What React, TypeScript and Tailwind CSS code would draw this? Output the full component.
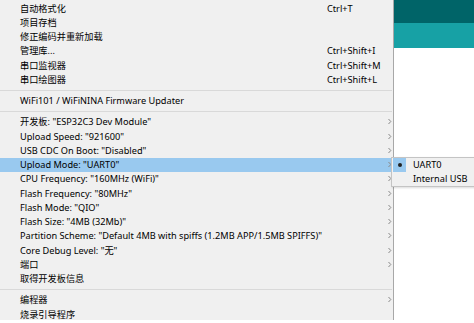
import React from 'react';

type Item =
    | { kind: 'sep' }
    | { kind: 'item'; label: string; shortcut?: string; sub?: boolean; active?: boolean };

const ITEMS: Item[] = [
    { kind: 'item', label: '自动格式化', shortcut: 'Ctrl+T' },
    { kind: 'item', label: '项目存档' },
    { kind: 'item', label: '修正编码并重新加载' },
    { kind: 'item', label: '管理库...', shortcut: 'Ctrl+Shift+I' },
    { kind: 'item', label: '串口监视器', shortcut: 'Ctrl+Shift+M' },
    { kind: 'item', label: '串口绘图器', shortcut: 'Ctrl+Shift+L' },
    { kind: 'sep' },
    { kind: 'item', label: 'WiFi101 / WiFiNINA Firmware Updater' },
    { kind: 'sep' },
    { kind: 'item', label: '开发板: "ESP32C3 Dev Module"', sub: true },
    { kind: 'item', label: 'Upload Speed: "921600"', sub: true },
    { kind: 'item', label: 'USB CDC On Boot: "Disabled"', sub: true },
    { kind: 'item', label: 'Upload Mode: "UART0"', sub: true, active: true },
    { kind: 'item', label: 'CPU Frequency: "160MHz (WiFi)"', sub: true },
    { kind: 'item', label: 'Flash Frequency: "80MHz"', sub: true },
    { kind: 'item', label: 'Flash Mode: "QIO"', sub: true },
    { kind: 'item', label: 'Flash Size: "4MB (32Mb)"', sub: true },
    { kind: 'item', label: 'Partition Scheme: "Default 4MB with spiffs (1.2MB APP/1.5MB SPIFFS)"', sub: true },
    { kind: 'item', label: 'Core Debug Level: "无"', sub: true },
    { kind: 'item', label: '端口', sub: true },
    { kind: 'item', label: '取得开发板信息' },
    { kind: 'sep' },
    { kind: 'item', label: '编程器', sub: true },
    { kind: 'item', label: '烧录引导程序' },
];

function Chevron() {
    return (
        <svg width="5" height="7" viewBox="0 0 5 7" className="shrink-0">
            <polyline points="1.5,1 3.8,3.5 1.5,6" fill="none" stroke="#8a8a8a" strokeWidth="1" />
        </svg>
    );
}

export default function App() {
    return (
        <div
            className="relative w-[474px] h-[323px] overflow-hidden bg-white text-[9.2px] text-black"
            style={{ fontFamily: '"Noto Sans", "Noto Sans CJK SC", sans-serif' }}
        >
            <div className="flex h-full">
                {/* Menu */}
                <div className="w-[394px] h-[320px] shrink-0 bg-[#f0f0f0] border-r border-[#a8a8a8] pt-px">
                    {ITEMS.map((it, i) =>
                        it.kind === 'sep' ? (
                            <div key={i} className="h-[7px] flex items-center">
                                <div className="w-[392px] h-px bg-[#d9d9d9]" />
                            </div>
                        ) : (
                            <div
                                key={i}
                                className={`h-[14.25px] flex items-center leading-none ${it.active ? 'bg-[#99c9ef]' : ''}`}
                            >
                                <span className="pl-[20px] w-[327px] shrink-0 whitespace-nowrap">{it.label}</span>
                                <span className="w-[60px] shrink-0 whitespace-nowrap">{it.shortcut ?? ''}</span>
                                {it.sub && <Chevron />}
                            </div>
                        ),
                    )}
                </div>

                {/* Editor area behind the menu */}
                <div className="flex-1 flex flex-col">
                    <div className="h-[23px] bg-[#006468]" />
                    <div className="h-[25px] bg-[#17a1a5]" />
                    <div className="flex-1 bg-white" />
                </div>
            </div>

            {/* Submenu */}
            <div className="absolute left-[391px] top-[157px] w-[90px] h-[30px] bg-[#f0f0f0] border border-[#c4c4c4] shadow-[1px_1px_2px_rgba(0,0,0,0.15)]">
                <div className="h-[14px] flex items-center leading-none">
                    <div className="w-[13px] h-[14px] ml-px bg-[#99c9ef] flex items-center justify-center">
                        <div className="w-[4px] h-[4px] rounded-full bg-[#222]" />
                    </div>
                    <span className="pl-[7px] whitespace-nowrap">UART0</span>
                </div>
                <div className="h-[14px] flex items-center leading-none">
                    <span className="pl-[21px] whitespace-nowrap">Internal USB</span>
                </div>
            </div>
        </div>
    );
}
